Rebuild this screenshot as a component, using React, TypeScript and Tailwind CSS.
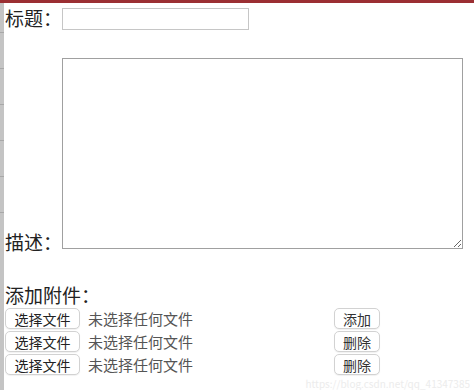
const font = { fontFamily: '"Noto Sans CJK SC", "Noto Sans", sans-serif' };

function FileRow({ action }: { action: string }) {
  return (
    <div className="flex items-center h-[23px]">
      <div className="flex w-[329px] items-center">
        <button className="h-[21px] w-[75px] rounded-[5px] border border-[#d2d2d2] bg-white text-[14px] leading-none text-[#222] shadow-[0_1px_1px_rgba(0,0,0,0.06)]">
          选择文件
        </button>
        <span className="ml-[8px] text-[15px] leading-none text-[#555]">未选择任何文件</span>
      </div>
      <button className="h-[21px] w-[46px] rounded-[5px] border border-[#d2d2d2] bg-white text-[14px] leading-none text-[#333] shadow-[0_1px_1px_rgba(0,0,0,0.06)]">
        {action}
      </button>
    </div>
  );
}

export default function App() {
  return (
    <div className="relative h-[390px] w-[474px] overflow-hidden bg-white" style={font}>
      <div className="absolute bottom-[0px] right-[4px] text-[10px] leading-[12px] text-[#ececec]">
        https://blog.csdn.net/qq_41347385
      </div>
      <div className="relative h-[3px] bg-[#9b2f33]" />
      <div className="relative flex h-[387px]">
        {/* side strip from the page behind */}
        <div className="flex w-[4px] flex-col bg-[#c4c4c4]">
          {[30, 36, 36, 36, 36, 36].map((h, i) => (
            <div key={i} className="border-b border-[#a8a8a8]" style={{ height: h }} />
          ))}
        </div>
        <div className="flex-1 pl-[1px] pt-[5px] text-[#222]">
          <div className="flex items-center">
            <span className="mt-[-4px] w-[57px] text-[19px] leading-none">标题：</span>
            <input className="h-[22px] w-[187px] border border-[#c6c6c6] bg-white outline-none" />
          </div>
          <div className="mt-[28px] flex items-end">
            <span className="w-[57px] text-[19px] leading-none mb-[-2px]">描述：</span>
            <textarea className="h-[191px] w-[401px] border border-[#a0a0a0] bg-white outline-none" />
          </div>
          <div className="mt-[36px] text-[19px] leading-none">添加附件：</div>
          <div className="mt-[3px]">
            <FileRow action="添加" />
            <FileRow action="删除" />
            <FileRow action="删除" />
          </div>
        </div>
      </div>
    </div>
  );
}
